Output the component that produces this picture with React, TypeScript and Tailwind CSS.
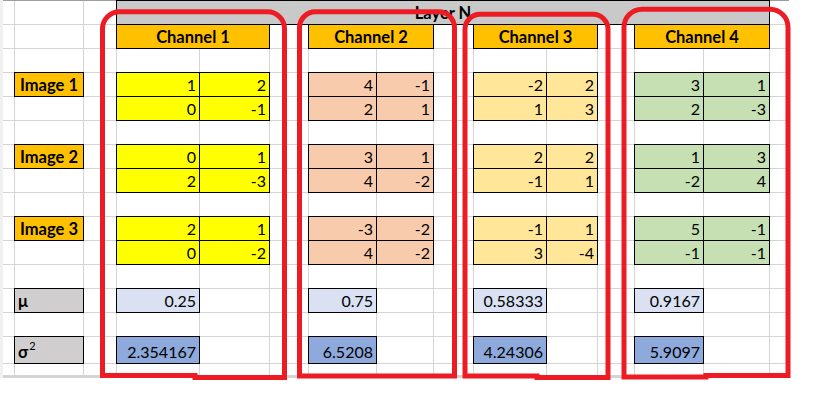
import React from 'react';

// channel -> image -> 2x2 kernel values
const data = [
  [[[1, 2], [0, -1]], [[0, 1], [2, -3]], [[2, 1], [0, -2]]],
  [[[4, -1], [2, 1]], [[3, 1], [4, -2]], [[-3, -2], [4, -2]]],
  [[[-2, 2], [1, 3]], [[2, 2], [-1, 1]], [[-1, 1], [3, -4]]],
  [[[3, 1], [2, -3]], [[1, 3], [-2, 4]], [[5, -1], [-1, -1]]],
];

const fills = ['bg-[#ffff00]', 'bg-[#f8cbad]', 'bg-[#ffe699]', 'bg-[#c6e0b4]'];
const means = ['0.25', '0.75', '0.58333', '0.9167'];
const variances = ['2.354167', '6.5208', '4.24306', '5.9097'];

const numCls = 'flex items-end justify-end pr-[3px] pb-[3px] outline outline-black';
const boldCls = 'flex items-end pb-[3px] font-bold text-[16.5px] outline outline-black';

function buildCells() {
  const nodes: React.ReactNode[] = [];
  let k = 0;
  const blank = (n = 1) => {
    for (let i = 0; i < n; i++) nodes.push(<div key={k++} className="bg-white" />);
  };

  // row 1: merged "Layer N" band
  blank(3);
  nodes.push(
    <div key={k++} className={`${boldCls} col-span-11 justify-center bg-[#c9c9c9]`}>
      Layer N
    </div>
  );
  blank();

  // row 2: channel headers
  blank(3);
  for (let c = 0; c < 4; c++) {
    nodes.push(
      <div key={k++} className={`${boldCls} col-span-2 justify-center bg-[#ffc000]`}>
        Channel {c + 1}
      </div>
    );
    blank();
  }

  // row 3
  blank(15);

  // image blocks
  for (let img = 0; img < 3; img++) {
    for (let r = 0; r < 2; r++) {
      blank();
      if (r === 0) {
        nodes.push(
          <div key={k++} className={`${boldCls} justify-center bg-[#ffc000]`}>
            Image {img + 1}
          </div>
        );
      } else {
        blank();
      }
      blank();
      for (let c = 0; c < 4; c++) {
        nodes.push(<div key={k++} className={`${numCls} ${fills[c]}`}>{data[c][img][r][0]}</div>);
        nodes.push(<div key={k++} className={`${numCls} ${fills[c]}`}>{data[c][img][r][1]}</div>);
        blank();
      }
    }
    blank(15);
  }

  // mean row
  blank();
  nodes.push(
    <div key={k++} className={`${boldCls} pl-[3px] bg-[#d0cece]`}>
      μ
    </div>
  );
  blank();
  for (let c = 0; c < 4; c++) {
    nodes.push(<div key={k++} className={`${numCls} bg-[#d9e1f2]`}>{means[c]}</div>);
    blank(2);
  }

  blank(15);

  // variance row
  blank();
  nodes.push(
    <div key={k++} className={`${boldCls} pl-[3px] bg-[#d0cece]`}>
      <span>
        σ<sup className="text-[11px] font-normal relative -top-[8px] ml-px">2</sup>
      </span>
    </div>
  );
  blank();
  for (let c = 0; c < 4; c++) {
    nodes.push(<div key={k++} className={`${numCls} bg-[#8ea9db]`}>{variances[c]}</div>);
    blank(2);
  }

  // last partial row
  blank(15);
  return nodes;
}

// hand-drawn highlight boxes (pen annotations over the sheet)
function boxPath(l: number, t: number, r: number, bl: number, br: number, step: number, rad: number) {
  return `M${l} ${bl} L${l} ${t + rad} A${rad} ${rad} 0 0 1 ${l + rad} ${t} L${r - rad} ${t} A${rad} ${rad} 0 0 1 ${r} ${t + rad} L${r} ${br} L${step} ${br} L${step} ${bl} Z`;
}

const marks = [
  boxPath(102.5, 11.7, 284.5, 375.5, 377.5, 195, 17),
  boxPath(299.5, 11.7, 454.5, 376, 376, 380, 16),
  boxPath(465, 14.3, 608, 376, 377.5, 537, 15),
  boxPath(624, 9.3, 788, 377, 375.5, 706, 18),
];

export default function App() {
  return (
    <div className="relative w-[822px] h-[396px] bg-white overflow-hidden font-['Lato',sans-serif] text-[16px] leading-none text-black">
      <div className="flex">
        <div className="w-[3px] h-[378px] bg-[#f0f0f0]" />
        <div className="grid grid-cols-[11px_68px_32px_82px_69px_38px_67px_56px_39px_72px_50px_36px_68px_65px_19px] grid-rows-[repeat(14,23px)_26px_11px] gap-px bg-[#d4d4d4] border-t border-[#9e9e9e]">
          {buildCells()}
        </div>
      </div>
      <svg className="absolute inset-0 pointer-events-none" width="822" height="396" viewBox="0 0 822 396" fill="none">
        {marks.map((d, i) => (
          <path key={i} d={d} stroke="#ed1c24" strokeWidth="5" strokeLinejoin="miter" />
        ))}
      </svg>
    </div>
  );
}
